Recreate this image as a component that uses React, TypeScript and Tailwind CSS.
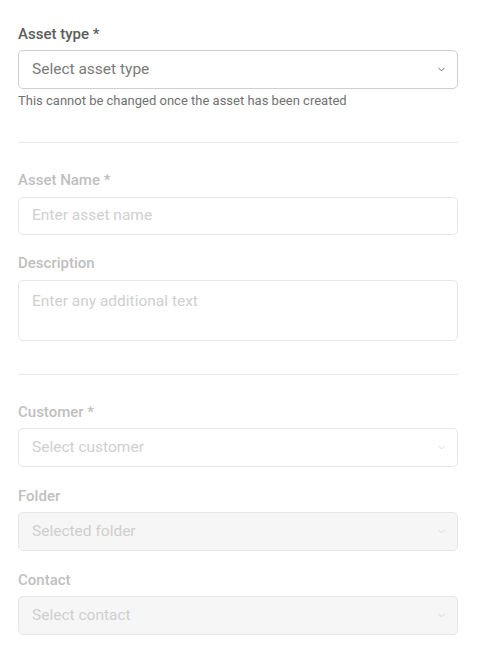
import { ChevronDown } from "lucide-react";

function Label({ text, faded }: { text: string; faded?: boolean }) {
  return (
    <div
      className={`text-[15px] leading-5 font-medium ${faded ? "text-[#bfbfbf]" : "text-[#5c5c5c]"}`}
    >
      {text}
    </div>
  );
}

function SelectBox({
  placeholder,
  faded,
  disabled,
}: {
  placeholder: string;
  faded?: boolean;
  disabled?: boolean;
}) {
  return (
    <div
      className={`mt-[6px] flex h-[39px] items-center justify-between rounded-[5px] border pl-[13px] pr-[10px] ${
        disabled ? "bg-[#f6f6f6]" : "bg-white"
      } ${faded ? "border-[#e6e6e6]" : "border-[#cfcfcf]"}`}
    >
      <span className={`text-[15.5px] ${faded ? "text-[#cfcfcf]" : "text-[#7a7a7a]"}`}>
        {placeholder}
      </span>
      <ChevronDown
        size={11}
        strokeWidth={2}
        className={faded ? "text-[#d4d4d4]" : "text-[#666666]"}
      />
    </div>
  );
}

export default function App() {
  return (
    <div
      className="min-h-screen bg-white pl-[18px] pr-[23px] pt-[24px]"
      style={{ fontFamily: "Roboto, 'Liberation Sans', sans-serif" }}
    >
      <section>
        <Label text="Asset type *" />
        <SelectBox placeholder="Select asset type" />
        <p className="mt-[4px] text-[13px] leading-4 text-[#717171]">
          This cannot be changed once the asset has been created
        </p>
      </section>

      <hr className="mt-[33px] border-t border-[#e8e8e8]" />

      <section className="mt-[27px]">
        <Label text="Asset Name *" faded />
        <div className="mt-[7px] flex h-[38px] items-center rounded-[5px] border border-[#e6e6e6] px-[13px]">
          <span className="text-[15.5px] text-[#cfcfcf]">Enter asset name</span>
        </div>

        <div className="mt-[18px]">
          <Label text="Description" faded />
        </div>
        <div className="mt-[7px] h-[61px] rounded-[5px] border border-[#e6e6e6] px-[13px] pt-[8px]">
          <span className="text-[15.5px] text-[#cfcfcf]">Enter any additional text</span>
        </div>
      </section>

      <hr className="mt-[33px] border-t border-[#e8e8e8]" />

      <section className="mt-[27px]">
        <Label text="Customer *" faded />
        <SelectBox placeholder="Select customer" faded />

        <div className="mt-[19px]">
          <Label text="Folder" faded />
        </div>
        <SelectBox placeholder="Selected folder" faded disabled />

        <div className="mt-[19px]">
          <Label text="Contact" faded />
        </div>
        <SelectBox placeholder="Select contact" faded disabled />
      </section>
    </div>
  );
}
